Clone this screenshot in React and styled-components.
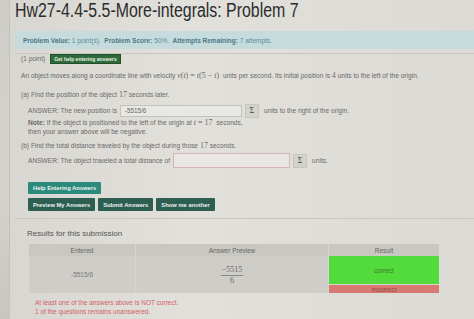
import styled, { createGlobalStyle } from "styled-components";

const Global = createGlobalStyle`
  html, body {
    margin: 0;
    padding: 0;
    background: #dddbd5;
    font-family: "Liberation Sans", Arial, sans-serif;
    color: #5a5a5a;
    overflow: hidden;
  }
`;

const Page = styled.div`
  width: 474px;
  height: 319px;
  display: flex;
  background: linear-gradient(90deg, #d8d6d0 0%, #e2e0da 40%, #dcdad4 100%);
`;

const Edge = styled.div`
  width: 9px;
  flex-shrink: 0;
  background: linear-gradient(180deg, #cfcdc7 0%, #d4d2cc 60%, #c8c6c0 100%);
  border-right: 1px solid #c4c2bc;
`;

const Main = styled.div`
  flex: 1;
  padding-left: 5px;
  overflow: hidden;
`;

const Title = styled.h1`
  margin: 0;
  font-size: 19.5px;
  font-weight: 400;
  color: #2c2c2c;
  line-height: 20px;
  white-space: nowrap;
  transform: scaleX(0.815);
  transform-origin: left center;
`;

const InfoBar = styled.div`
  margin-top: 11px;
  height: 18px;
  background: #c6dcdc;
  display: flex;
  align-items: center;
  padding-left: 8px;
  font-size: 6.5px;
  color: #5b8a9a;
  white-space: nowrap;
  b {
    color: #4c7787;
  }
`;

const Divider = styled.div`
  height: 1px;
  background: #c9c7c1;
  margin: ${(p) => p.$m || "4px 0 0"};
`;

const Body = styled.div`
  padding-left: 6px;
  font-size: 6.6px;
  color: #6a6a6a;
  white-space: nowrap;
`;

const Line = styled.div`
  margin-top: ${(p) => p.$mt || 0}px;
  padding-left: ${(p) => p.$indent || 0}px;
  line-height: ${(p) => p.$h || 10}px;
  height: ${(p) => p.$h || 10}px;
  display: flex;
  align-items: center;
`;

const SmallGreen = styled.span`
  background: #2f6a3a;
  color: #e9f2e6;
  font-size: 5px;
  font-weight: 700;
  line-height: 6px;
  padding: 1px 3px;
  border: 1px solid #20502a;
  margin-left: 5px;
`;

const Math = styled.span`
  font-family: "Liberation Serif", "Times New Roman", serif;
  font-style: ${(p) => (p.$up ? "normal" : "italic")};
  font-size: 8px;
  white-space: pre;
`;

const Input = styled.span`
  width: ${(p) => p.$w}px;
  height: ${(p) => p.$hh || 12}px;
  box-sizing: border-box;
  border: 1px solid ${(p) => p.$border || "#c2c2bc"};
  background: #e8e7e3;
  display: inline-flex;
  align-items: center;
  padding-left: 4px;
  margin: 0 3px;
  font-size: 6.3px;
  color: #666;
`;

const Sigma = styled.span`
  width: 12px;
  height: 12px;
  display: inline-flex;
  align-items: center;
  justify-content: center;
  background: #d3d2cd;
  border: 1px solid #c7c6c0;
  font-family: "Liberation Serif", serif;
  font-size: 8px;
  color: #444;
  margin-right: 5px;
`;

const Btn = styled.span`
  display: inline-flex;
  align-items: center;
  justify-content: center;
  height: ${(p) => p.$h || 13}px;
  padding: 0 ${(p) => p.$px || 5}px;
  background: ${(p) => (p.$light ? "#2a8a7c" : "#2c5e52")};
  color: #eef3ef;
  font-size: 5.8px;
  font-weight: 700;
  border-radius: 1px;
  box-sizing: border-box;
`;

const Buttons = styled.div`
  display: flex;
  gap: 3px;
  margin-top: ${(p) => p.$mt || 3}px;
  padding-left: 13px;
`;

const ResultsTitle = styled.div`
  margin: 10px 0 0 12px;
  font-size: 8px;
  color: #555;
`;

const Table = styled.div`
  margin: 6px 0 0 14px;
  width: 410px;
  display: grid;
  grid-template-columns: 107px 193px 110px;
  grid-template-rows: 12px 28px 9px;
  font-size: 6.5px;
  color: #777;
`;

const Head = styled.div`
  background: #c9c7c1;
  display: flex;
  align-items: center;
  justify-content: center;
  color: #666;
  border-right: ${(p) => (p.$last ? "none" : "1px solid #d6d4ce")};
`;

const Cell = styled.div`
  background: #cfcdc7;
  display: flex;
  align-items: center;
  justify-content: center;
  grid-row: ${(p) => p.$span || "auto"};
  border-right: 1px solid #d8d6d0;
`;

const Status = styled.div`
  background: ${(p) => (p.$ok ? "#52dc3c" : "#d97a72")};
  display: flex;
  align-items: center;
  justify-content: center;
  color: ${(p) => (p.$ok ? "#3a7a2c" : "#8d4a44")};
  border-top: ${(p) => (p.$ok ? "none" : "1px solid #d8d6d0")};
`;

const Fraction = styled.span`
  display: inline-flex;
  flex-direction: column;
  align-items: center;
  font-family: "Liberation Serif", serif;
  font-size: 8px;
  line-height: 9px;
  color: #6a6a6a;
  span:first-child {
    border-bottom: 1px solid #888;
    padding: 0 1px 1px;
  }
`;

const Warn = styled.div`
  margin: 5px 0 0 20px;
  font-size: 6.5px;
  line-height: 9px;
  color: #d4606a;
`;

export default function App() {
  return (
    <>
      <Global />
      <Page>
        <Edge />
        <Main>
          <Title>Hw27-4.4-5.5-More-integrals: Problem 7</Title>
          <InfoBar>
            <b>Problem Value:</b>&nbsp;1 point(s).&nbsp;&nbsp;<b>Problem Score:</b>&nbsp;50%.&nbsp;&nbsp;
            <b>Attempts Remaining:</b>&nbsp;7 attempts.
          </InfoBar>
          <Divider />
          <Body>
            <Line>
              (1 point)
              <SmallGreen>Get help entering answers</SmallGreen>
            </Line>
            <Line $mt={7}>
              An object moves along a coordinate line with velocity&nbsp;
              <Math>v</Math>
              <Math $up>(</Math>
              <Math>t</Math>
              <Math $up>) = </Math>
              <Math>t</Math>
              <Math $up>(5 − </Math>
              <Math>t</Math>
              <Math $up>) </Math>
              &nbsp;units per second. Its initial position is&nbsp;<Math $up>4</Math>&nbsp;units to the left of the origin.
            </Line>
            <Line $mt={9}>
              (a) Find the position of the object&nbsp;<Math $up>17</Math>&nbsp;seconds later.
            </Line>
            <Line $mt={4} $indent={7} $h={13}>
              ANSWER: The new position is
              <Input $w={122}>-5515/6</Input>
              <Sigma>Σ</Sigma>
              units to the right of the origin.
            </Line>
            <Line $mt={1} $indent={7} $h={9}>
              <b>Note:</b>&nbsp;If the object is positioned to the left of the origin at&nbsp;<Math>t</Math>
              <Math $up> = 17 </Math>&nbsp;seconds,
            </Line>
            <Line $indent={7} $h={9}>
              then your answer above will be negative.
            </Line>
            <Line $mt={5}>
              (b) Find the total distance traveled by the object during those&nbsp;<Math $up>17</Math>&nbsp;seconds.
            </Line>
            <Line $mt={2} $indent={7} $h={15}>
              ANSWER: The object traveled a total distance of
              <Input $w={117} $hh={15} $border="#d9b4b4" />
              <Sigma>Σ</Sigma>
              units.
            </Line>
          </Body>
          <Buttons $mt={14}>
            <Btn $light $h={12}>Help Entering Answers</Btn>
          </Buttons>
          <Buttons $mt={4}>
            <Btn>Preview My Answers</Btn>
            <Btn>Submit Answers</Btn>
            <Btn>Show me another</Btn>
          </Buttons>
          <Divider $m="7px 0 0" />
          <ResultsTitle>Results for this submission</ResultsTitle>
          <Table>
            <Head>Entered</Head>
            <Head>Answer Preview</Head>
            <Head $last>Result</Head>
            <Cell $span="span 2">-5515/6</Cell>
            <Cell $span="span 2">
              <Fraction>
                <span>−5515</span>
                <span>6</span>
              </Fraction>
            </Cell>
            <Status $ok>correct</Status>
            <Status>incorrect</Status>
          </Table>
          <Warn>
            At least one of the answers above is NOT correct.
            <br />1 of the questions remains unanswered.
          </Warn>
        </Main>
      </Page>
    </>
  );
}
